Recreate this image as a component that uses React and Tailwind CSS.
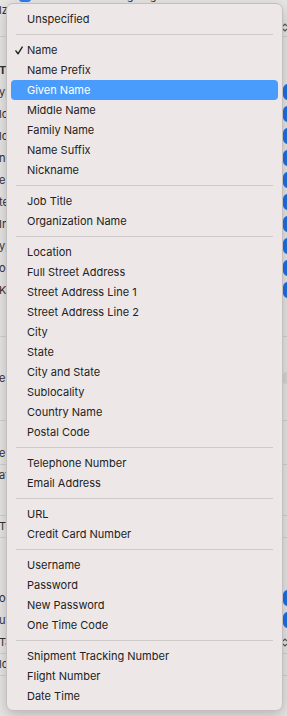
import React from "react";

const groups = [
  ["Unspecified"],
  ["Name", "Name Prefix", "Given Name", "Middle Name", "Family Name", "Name Suffix", "Nickname"],
  ["Job Title", "Organization Name"],
  [
    "Location",
    "Full Street Address",
    "Street Address Line 1",
    "Street Address Line 2",
    "City",
    "State",
    "City and State",
    "Sublocality",
    "Country Name",
    "Postal Code",
  ],
  ["Telephone Number", "Email Address"],
  ["URL", "Credit Card Number"],
  ["Username", "Password", "New Password", "One Time Code"],
  ["Shipment Tracking Number", "Flight Number", "Date Time"],
];

// background inspector rows: [height, leftText, bold, rightKind, lineTop]
const bgRows = [
  [18, "", false, "chev", false],
  [23, "", false, null, true],
  [22, "T", true, null, false],
  [22, "yp", false, "blue", false],
  [22, "lc", false, "blue", false],
  [22, "lc", false, "blue", false],
  [22, "ne", false, "blue", false],
  [22, "e", false, "blue", false],
  [22, "te", false, "blue", false],
  [22, "In", false, "blue", false],
  [22, "yp", false, "blue", false],
  [22, "oc", false, "blue", false],
  [22, "Ke", false, "blue", false],
  [35, "", false, null, false],
  [22, "", false, null, true],
  [40, "er", false, "bump", false],
  [22, "", false, null, false],
  [22, "", false, null, true],
  [22, "er", false, null, false],
  [22, "at", false, null, true],
  [29, "", false, null, false],
  [22, "TI", false, null, true],
  [22, "", false, null, true],
  [28, "", false, null, false],
  [22, "oc", false, "blue", false],
  [22, "ut", false, "blue", false],
  [22, "Ta", false, "chev", false],
  [22, "lc", false, null, true],
  [22, "", false, null, true],
];

function Check() {
  return (
    <svg width="8" height="9" viewBox="0 0 8 9" className="shrink-0">
      <path
        d="M0.9 4.9 L3 7.8 L7.2 1.1"
        fill="none"
        stroke="#222"
        strokeWidth="1.4"
        strokeLinecap="round"
        strokeLinejoin="round"
      />
    </svg>
  );
}

function Chevrons() {
  return (
    <svg width="6" height="11" viewBox="0 0 6 11" className="-mr-[1px]">
      <path d="M1 4 L3 2 L5 4" fill="none" stroke="#555" strokeWidth="1.1" />
      <path d="M1 7 L3 9 L5 7" fill="none" stroke="#555" strokeWidth="1.1" />
    </svg>
  );
}

function Item({ label, checked, active }) {
  return (
    <div
      className={
        "mx-[4px] h-[20px] flex items-center rounded-[4px] " +
        (active ? "bg-[#4a9cfc] text-white" : "text-[#222]")
      }
    >
      <div className="w-[16px] flex items-center justify-start pl-[4px]">
        {checked ? <Check /> : null}
      </div>
      <span className="text-[11px] leading-none whitespace-nowrap">{label}</span>
    </div>
  );
}

export default function App() {
  return (
    <div
      className="relative w-[287px] h-[716px] overflow-hidden bg-[#e8e5e5] text-[#333]"
      style={{ fontFamily: "Inter, 'Liberation Sans', sans-serif" }}
    >
      {/* underlying inspector */}
      <div className="flex flex-col -mt-[11px]">
        <div className="h-[14px] flex items-center gap-[5px] pl-[19px]">
          <div className="w-[12px] h-[12px] rounded-[3px] bg-[#2f7df6]" />
          <span className="text-[11px] text-[#262626] whitespace-nowrap">
            Clear when editing begins
          </span>
        </div>
        <div className="h-[15px] flex items-end">
          <span className="text-[11px] -ml-[1px]">lz</span>
        </div>
        {bgRows.map(([h, t, b, r, line], i) => (
          <div
            key={i}
            className={
              "flex items-center justify-between " +
              (line ? "border-t border-[#d3d0d0]" : "")
            }
            style={{ height: h }}
          >
            <span
              className={
                "text-[11px] -ml-[1px] whitespace-nowrap " + (b ? "font-bold" : "")
              }
            >
              {t}
            </span>
            {r === "blue" ? (
              <div className="w-[10px] h-[16px] rounded-[5px] bg-[#1f6fe5] -mr-[6px]" />
            ) : r === "chev" ? (
              <Chevrons />
            ) : r === "bump" ? (
              <div className="w-[8px] h-[12px] rounded-[3px] bg-[#d8d5d5] -mr-[4px]" />
            ) : null}
          </div>
        ))}
      </div>

      {/* popup menu */}
      <div className="absolute left-[6px] top-[3px] w-[277px] h-[708px] rounded-[7px] bg-[#ede8e7] border border-[#c4c0bf] shadow-[0_4px_14px_rgba(0,0,0,0.22)] pt-[5px]">
        {groups.map((g, gi) => (
          <div key={gi}>
            {gi > 0 && (
              <div className="h-[11px] flex items-center px-[9px]">
                <div className="h-px w-full bg-[#cfcaca]" />
              </div>
            )}
            {g.map((label) => (
              <Item
                key={label}
                label={label}
                checked={label === "Name"}
                active={label === "Given Name"}
              />
            ))}
          </div>
        ))}
      </div>
    </div>
  );
}
